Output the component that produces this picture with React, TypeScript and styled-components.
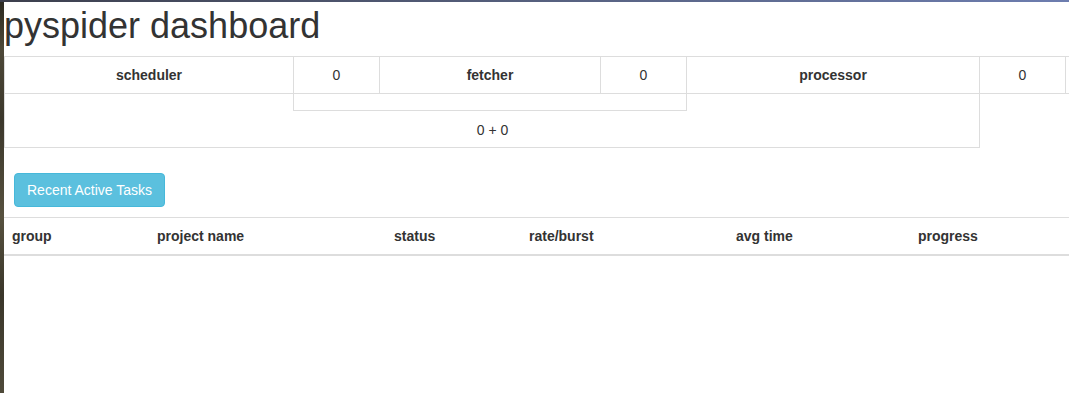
import styled, { createGlobalStyle } from 'styled-components';

const GlobalStyle = createGlobalStyle`
	* {
		box-sizing: border-box;
	}
	html,
	body {
		margin: 0;
		padding: 0;
		background: #fff;
		overflow: hidden;
	}
	body {
		font-family: 'Liberation Sans', Arial, Helvetica, sans-serif;
		font-size: 14px;
		line-height: 20px;
		color: #333;
	}
`;

const Screen = styled.div`
	display: flex;
	flex-direction: column;
	width: 1069px;
	height: 393px;
	overflow: hidden;
`;

// strip of the browser window frame above the page
const TopBar = styled.div`
	height: 2px;
	flex: none;
	background: linear-gradient(to right, #3c3f4d, #56607e 50%, #6d7daf);
`;

const Body = styled.div`
	display: flex;
	flex: 1;
	min-height: 0;
`;

// the desktop peeking out on the left
const Backdrop = styled.div`
	width: 4px;
	flex: none;
	background: linear-gradient(
		to bottom,
		#2c2a22 0%,
		#4d4838 12%,
		#3b372b 30%,
		#57513f 55%,
		#3a362a 75%,
		#4f4a3a 100%
	);
`;

const Page = styled.div`
	flex: 1;
	min-width: 0;
	overflow: hidden;
`;

const Title = styled.h1`
	margin: 4px 0 10px;
	font-size: 36px;
	font-weight: 500;
	line-height: 40px;
	color: #333;
	white-space: nowrap;
`;

const StatsGrid = styled.div`
	display: grid;
	grid-template-columns: 289px 86px 221px 86px 293px 86px 120px;
	grid-template-rows: 37px 17px 37px;
	width: max-content;
	border-top: 1px solid #ddd;
	border-left: 1px solid #ddd;
`;

const StatCell = styled.div<{ $head?: boolean }>`
	grid-row: 1;
	padding: 8px;
	text-align: center;
	font-weight: ${(p) => (p.$head ? 700 : 400)};
	border-right: 1px solid #ddd;
	border-bottom: 1px solid #ddd;
	white-space: nowrap;
`;

const QueueFrame = styled.div`
	grid-column: 1 / 6;
	grid-row: 2 / 4;
	border-right: 1px solid #ddd;
	border-bottom: 1px solid #ddd;
`;

const QueueBar = styled.div`
	grid-column: 2 / 5;
	grid-row: 2;
	margin-left: -1px;
	border-left: 1px solid #ddd;
	border-right: 1px solid #ddd;
	border-bottom: 1px solid #ddd;
`;

const QueueSum = styled.div`
	grid-column: 1 / 6;
	grid-row: 3;
	align-self: center;
	text-align: center;
`;

const InfoButton = styled.button`
	display: block;
	margin: 25px 0 0 10px;
	padding: 6px 12px;
	height: 34px;
	font-family: inherit;
	font-size: 14px;
	line-height: 20px;
	color: #fff;
	background-color: #5bc0de;
	border: 1px solid #46b8da;
	border-radius: 4px;
	cursor: pointer;
`;

const TaskHead = styled.div`
	display: grid;
	grid-template-columns: 145px 237px 135px 207px 182px 1fr;
	margin-top: 10px;
	border-top: 1px solid #ddd;
	border-bottom: 2px solid #ddd;
`;

const HeadCell = styled.div`
	padding: 8px;
	font-weight: 700;
	white-space: nowrap;
`;

const stats = [
	{ name: 'scheduler', value: 0 },
	{ name: 'fetcher', value: 0 },
	{ name: 'processor', value: 0 },
];

const columns = ['group', 'project name', 'status', 'rate/burst', 'avg time', 'progress'];

export default function App() {
	return (
		<>
			<GlobalStyle />
			<Screen>
				<TopBar />
				<Body>
					<Backdrop />
					<Page>
						<Title>pyspider dashboard</Title>

						<StatsGrid>
							{stats.map((s) => [
								<StatCell key={s.name} $head>
									{s.name}
								</StatCell>,
								<StatCell key={s.name + '-v'}>{s.value}</StatCell>,
							])}
							<StatCell />
							<QueueFrame />
							<QueueBar />
							<QueueSum>0 + 0</QueueSum>
						</StatsGrid>

						<InfoButton>Recent Active Tasks</InfoButton>

						<TaskHead>
							{columns.map((c) => (
								<HeadCell key={c}>{c}</HeadCell>
							))}
						</TaskHead>
					</Page>
				</Body>
			</Screen>
		</>
	);
}
